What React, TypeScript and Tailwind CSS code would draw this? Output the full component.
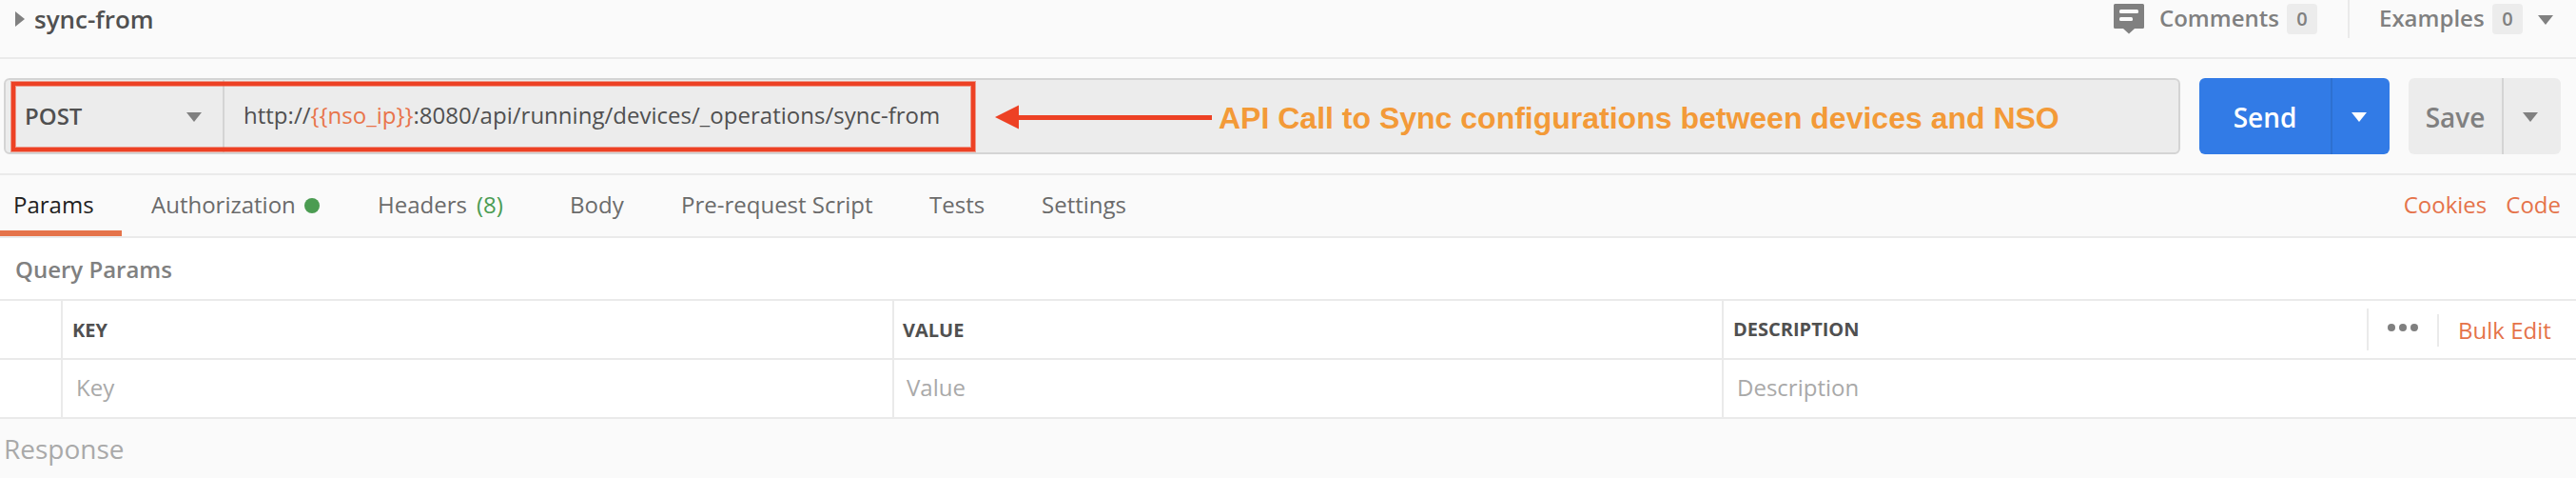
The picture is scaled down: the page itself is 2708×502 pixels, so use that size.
import React from "react";

type CaretProps = { className?: string };

function Caret({ className = "" }: CaretProps) {
  return (
    <svg className={`h-[10px] w-4 shrink-0 ${className}`} viewBox="0 0 16 10" fill="currentColor" aria-hidden="true">
      <path d="M0 0h16L8 10z" />
    </svg>
  );
}

function CommentIcon() {
  return (
    <svg className="h-8 w-8 shrink-0" viewBox="0 0 32 32" aria-hidden="true">
      <path d="M1.5 0h29A1.5 1.5 0 0 1 32 1.5v23a1.5 1.5 0 0 1-1.5 1.5H22l-6 5.5L10 26H1.5A1.5 1.5 0 0 1 0 24.500V1.500A1.500 1.500 0 0 1 1.500 0z" fill="#808080" />
      <rect x="6" y="6" width="20" height="4" rx="1.500" fill="#fafafa" />
      <rect x="6" y="14" width="14" height="4" rx="1.500" fill="#fafafa" />
    </svg>
  );
}

function CountBadge({ value }: { value: number }) {
  return (
    <span className="flex h-8 w-8 items-center justify-center rounded bg-[#ececec] text-[20px] font-semibold leading-8">
      {value}
    </span>
  );
}

function TitleBar() {
  return (
    <header className="flex h-[62px] items-start justify-between border-b-2 border-[#eaeaea]">
      <div className="flex h-10 items-center pl-4">
        <svg className="h-4 w-[10px]" viewBox="0 0 10 16" fill="#808080" aria-hidden="true">
          <path d="M0 0l10 8-10 8z" />
        </svg>
        <span className="pl-[10px] text-[26px] font-semibold leading-10">sync-from</span>
      </div>
      <div className="flex h-10 items-center text-[24px] font-semibold text-[#808080]">
        <CommentIcon />
        <span className="w-[150px] pb-[2px] pl-4 leading-[38px]">Comments</span>
        <CountBadge value={0} />
        <div className="ml-8 h-10 w-[2px] bg-[#eaeaea]" />
        <span className="w-[150px] pb-[2px] pl-[31px] leading-[38px]">Examples</span>
        <CountBadge value={0} />
        <Caret className="ml-4 mr-6 mt-[2px]" />
      </div>
    </header>
  );
}

function Annotation() {
  return (
    <>
      <div className="absolute left-[6px] top-[2px] h-[73px] w-[1013px] border-4 border-[#ed4124] shadow-[0_0_0_1px_rgba(237,65,36,0.5),inset_0_0_0_1px_rgba(237,65,36,0.5)]" />
      <div className="absolute left-[1040px] top-0 flex h-[76px] items-center">
        <svg className="mt-[2px] h-[26px] w-[228px]" viewBox="0 0 228 26" fill="#ed4124" aria-hidden="true">
          <path d="M0 13L25 0.500V11H228V16H25V25.500z" />
        </svg>
        <span className="whitespace-nowrap pl-[7px] pt-1 font-['Liberation_Sans',Arial,sans-serif] text-[32px] font-bold leading-[72px] text-[#f39a38]">
          API Call to Sync configurations between devices and NSO
        </span>
      </div>
    </>
  );
}

function RequestBar() {
  return (
    <section className="flex h-[122px] items-center border-b-2 border-[#eaeaea] pl-1 pr-4">
      <div className="relative flex h-20 w-[2288px] rounded-md border-2 border-[#d4d4d4] bg-[#ececec]">
        <div className="flex w-[230px] items-center justify-between border-r-2 border-[#d4d4d4] pl-5 pr-[22px] text-[24px] font-semibold">
          <span>POST</span>
          <Caret className="mt-[2px] text-[#808080]" />
        </div>
        <div className="flex items-center whitespace-pre pb-[3px] pl-5 text-[24px] tracking-[0.015px]">
          http://<span className="text-[#e8744a]">{"{{nso_ip}}"}</span>:8080/api/running/devices/_operations/sync-from
        </div>
        <Annotation />
      </div>
      <div className="ml-5 flex h-20 w-[200px] rounded-md bg-[#327be6] text-[28px] font-semibold text-white">
        <div className="flex w-[138px] items-center justify-center pt-[2px]">Send</div>
        <div className="flex flex-1 items-center border-l-2 border-[#2e70d1] pl-5">
          <Caret className="mt-[2px]" />
        </div>
      </div>
      <div className="ml-5 flex h-20 w-[160px] rounded-md bg-[#ececec] text-[28px] font-semibold text-[#808080]">
        <div className="flex w-[98px] items-center justify-center pt-[2px]">Save</div>
        <div className="flex flex-1 items-center border-l-2 border-[#d4d4d4] pl-5">
          <Caret className="mt-[2px]" />
        </div>
      </div>
    </section>
  );
}

function Tabs() {
  return (
    <nav className="flex h-[66px] justify-between border-b-2 border-[#eaeaea] text-[24px] text-[#6b6b6b]">
      <div className="flex leading-[62px]">
        <div className="-mb-[2px] h-[64px] w-[128px]">
          <div className="h-[58px] pl-[14px] text-[#212121]">Params</div>
          <div className="h-[6px] bg-[#e5734a]" />
        </div>
        <div className="flex w-[238px] pl-[31px]">
          Authorization
          <span className="ml-[9px] mt-6 h-4 w-4 rounded-full bg-[#4b9c52]" />
        </div>
        <div className="w-[202px] pl-[31px]">
          Headers<span className="pl-[10px] text-[#4b9c52]">(8)</span>
        </div>
        <div className="w-[117px] pl-[31px]">Body</div>
        <div className="w-[262px] pl-[31px]">Pre-request Script</div>
        <div className="w-[118px] pl-[30px]">Tests</div>
        <div className="pl-[30px]">Settings</div>
      </div>
      <div className="flex gap-5 pr-4 leading-[62px] text-[#e5734a]">
        <span>Cookies</span>
        <span>Code</span>
      </div>
    </nav>
  );
}

function ParamsTable() {
  return (
    <section className="bg-white">
      <h2 className="h-[64px] pl-4 text-[24px] font-semibold leading-[66px] text-[#808080]">Query Params</h2>
      <div className="grid h-[62px] grid-cols-[64px_874px_872px_1fr] border-t-2 border-[#eaeaea] text-[20px] font-bold leading-[62px]">
        <div />
        <div className="h-[60px] border-l-2 border-[#eaeaea] pl-[10px]">KEY</div>
        <div className="h-[60px] border-l-2 border-[#eaeaea] pl-[9px]">VALUE</div>
        <div className="flex h-[60px] items-center justify-between border-l-2 border-[#eaeaea] pl-[10px]">
          <span>DESCRIPTION</span>
          <div className="flex w-[220px] items-center font-normal">
            <div className="h-11 w-[2px] bg-[#eaeaea]" />
            <svg className="mb-1 ml-5 mr-5 h-2 w-8" viewBox="0 0 32 8" fill="#808080" aria-hidden="true">
              <circle cx="4" cy="4" r="4" />
              <circle cx="16" cy="4" r="4" />
              <circle cx="28" cy="4" r="4" />
            </svg>
            <div className="mb-[-2px] h-[34px] w-[2px] bg-[#eaeaea]" />
            <span className="pl-5 pt-[2px] text-[24px] leading-[58px] text-[#e5734a]">Bulk Edit</span>
          </div>
        </div>
      </div>
      <div className="grid h-16 grid-cols-[64px_874px_872px_1fr] border-y-2 border-[#eaeaea] text-[24px] leading-[58px] text-[#a9a9a9]">
        <div />
        <div className="border-l-2 border-[#eaeaea] pl-[14px]">Key</div>
        <div className="border-l-2 border-[#eaeaea] pl-[13px]">Value</div>
        <div className="border-l-2 border-[#eaeaea] pl-[14px]">Description</div>
      </div>
    </section>
  );
}

export default function App() {
  return (
    <main className="h-[502px] w-[2708px] overflow-hidden bg-[#fafafa] font-['Open_Sans',sans-serif] text-[#505050]">
      <TitleBar />
      <RequestBar />
      <Tabs />
      <ParamsTable />
      <div className="h-[60px] pl-1 text-[28px] leading-[62px] text-[#a9a9a9]">Response</div>
    </main>
  );
}
